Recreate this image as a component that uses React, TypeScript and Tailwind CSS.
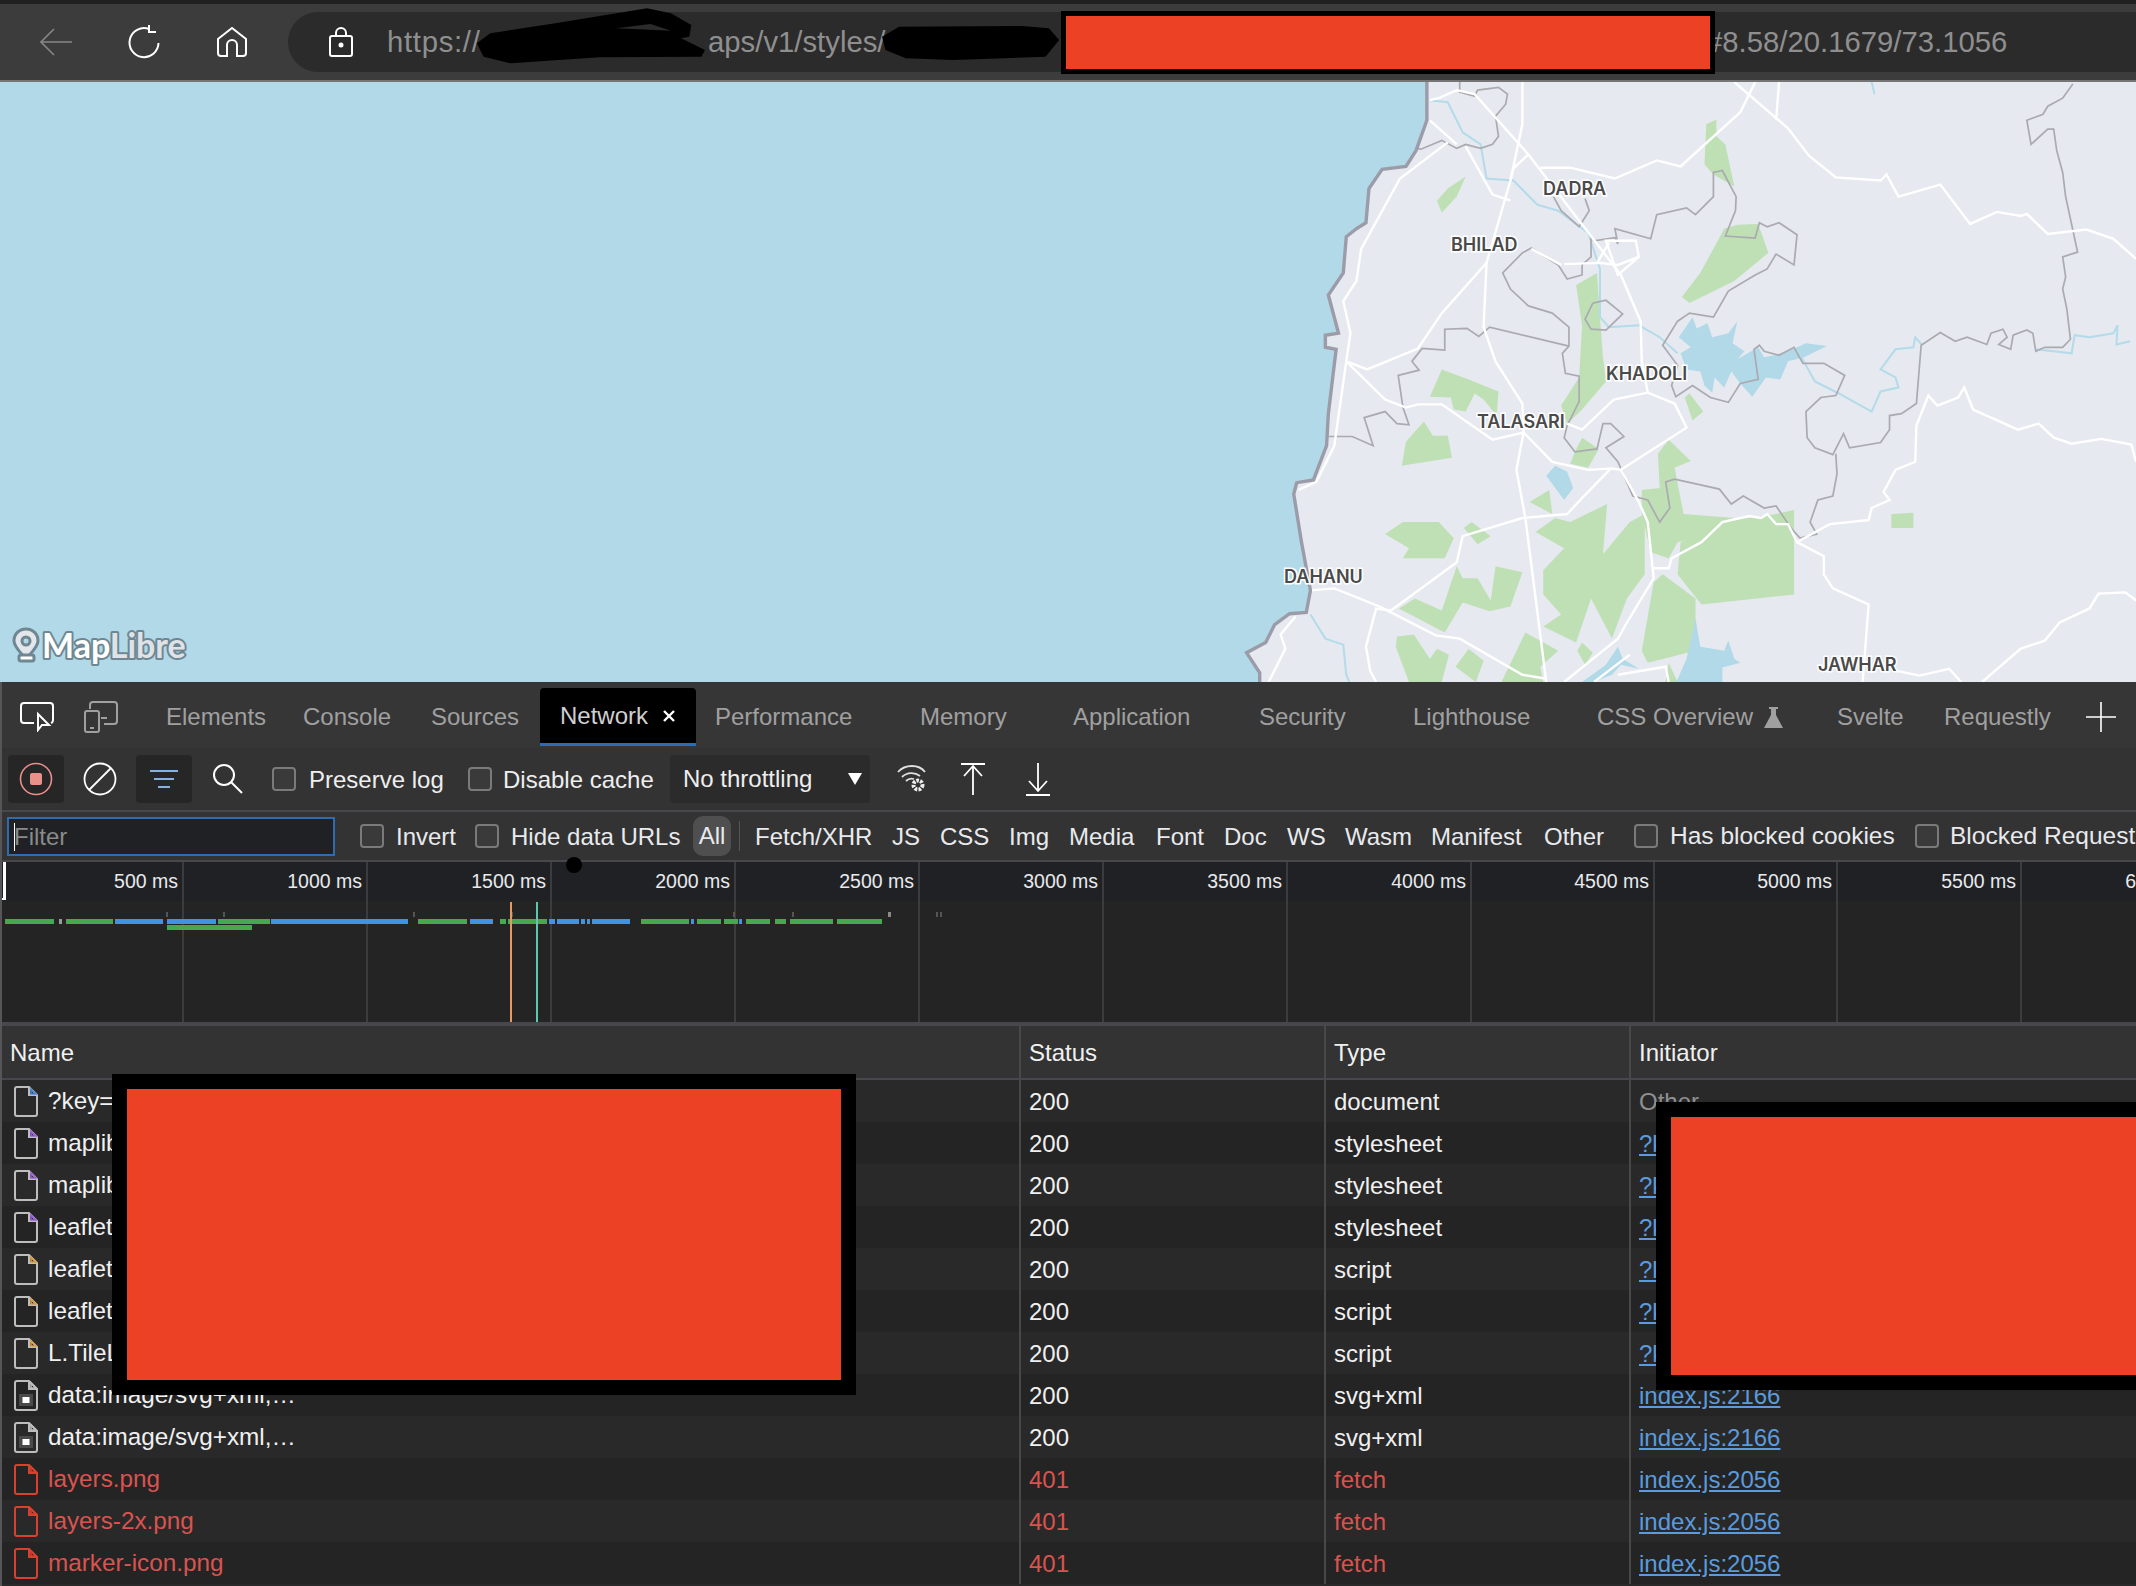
import React from "react";

const greens = [
  "848,160 865,148 865,190 880,210 895,315 860,285 845,260",
  "900,410 935,408 952,480 895,550 820,605 807,590 838,530 860,470 878,420",
  "445,290 430,340 405,380 397,350 415,320",
  "630,560 665,530 670,640 675,740 680,800 640,870 615,905 605,860 635,790 640,660",
  "405,770 450,795 500,825 497,885 475,845 460,830 445,875 425,870 420,840 385,838",
  "375,900 390,935 415,935 422,990 338,1010 345,950",
  "820,830 843,875 825,897 812,840",
  "640,940 668,968 650,1015 620,1005 628,975",
  "785,945 822,998 795,1015 810,1130 895,1140 850,1180 800,1200 785,1240 755,1225 740,1130 740,1070 770,1065 767,980",
  "995,1120 995,1330 840,1355 800,1280 805,1200 870,1150 965,1130",
  "682,1105 675,1230 720,1150 745,1130 745,1280 715,1340 690,1440 655,1340 630,1450 575,1410 605,1380 575,1330 575,1270 610,1215 562,1175 595,1140 620,1150",
  "585,1070 590,1130 552,1100",
  "340,1150 400,1150 425,1190 410,1240 340,1240 350,1215 310,1180",
  "455,1150 487,1185 465,1205 442,1165",
  "430,1260 440,1290 465,1290 487,1345 495,1260 540,1275 520,1360 485,1372 440,1350 410,1425 333,1365 360,1340 405,1370",
  "775,1280 830,1340 830,1470 750,1500 740,1470 760,1300",
  "545,1425 600,1470 570,1510 575,1548 505,1548",
  "330,1435 358,1430 385,1490 397,1465 417,1480 405,1548 350,1548 328,1460",
  "450,1465 475,1495 462,1548 428,1510",
  "640,1450 658,1475 645,1505 632,1470",
  "1158,1130 1195,1127 1195,1165 1158,1165",
  "785,1500 800,1548 780,1548",
];

const lakes = [
  "825,640 832,668 850,655 858,690 885,680 900,650 892,705 912,725 900,745 935,715 945,740 962,735 1000,715 1015,705 1050,712 1012,740 985,750 972,795 948,790 925,838 905,805 890,775 878,815 862,790 858,828 845,810 838,775 815,770 805,730 822,715 802,690",
  "595,1010 615,1025 625,1065 610,1095 600,1075 580,1035",
  "830,1390 838,1460 878,1470 885,1445 895,1490 905,1500 875,1512 875,1548 798,1548 815,1490",
  "700,1460 708,1490 735,1515 705,1505 690,1530 660,1548 640,1548 680,1505",
];

const rivers = [
  "385,100 415,105 440,180 470,210 480,295 525,300 565,360 600,375 650,430 670,520 670,640 685,665 735,660 770,690 800,730",
  "1125,55 1130,85",
  "1000,720 1030,800 1070,830 1125,875 1140,825 1170,815 1165,790 1140,770 1165,720 1195,715 1198,690 1210,710",
  "1400,720 1460,730 1465,685 1490,690 1530,680 1537,660 1535,708 1558,700",
  "185,1380 210,1440 240,1455 245,1530 250,1548",
];

const borders = [
  "435,55 435,80 460,90 465,75 500,68 515,85 512,110 495,140 500,190 490,210 470,220 445,210 430,220 405,200 370,222 360,220",
  "592,340 605,375 635,415 652,375 645,345",
  "655,440 660,450 695,442 700,458 695,420 755,445 765,385 815,368 830,385 860,340 860,280 875,275 898,340 897,375 880,438 930,443 937,405 950,415 970,405 1000,435 995,510 965,483 950,520 930,535 885,575 860,640 820,630 800,650 775,710 800,760 790,810 797,838 825,810 855,840 885,852 905,805 935,795 928,720 937,710 945,725 970,735 995,715 1010,755 1045,755 1080,785 1065,835 1040,840 1015,875 1017,940 1030,965 1060,982 1078,930 1088,965 1140,952 1155,920 1155,885 1175,880 1200,855 1208,710 1240,678 1265,700 1285,690 1318,708 1325,680 1345,670 1352,690 1338,708 1358,720 1362,685 1385,672 1395,680 1400,725 1415,715 1445,715 1458,695 1452,620 1445,570 1450,540 1445,490 1470,478 1450,340 1445,280 1435,225 1430,172 1420,172 1392,210 1385,150 1412,135 1420,115 1445,95 1462,60",
  "655,440 655,490 640,510 640,535 615,545 600,510 555,468 540,480 507,530 520,570 550,612 590,630 618,665 618,712 607,730 612,780 635,787 635,850 615,910 610,940 628,975 665,968 675,905 688,905 710,937 680,965 700,1000 725,1085 750,1095 770,1150 787,1115 780,1050 795,1043 870,1068 890,1105 910,1085 945,1115 965,1110 990,1165 1005,1190 1033,1180 1022,1150 1035,1095 1060,1085 1067,1030 1065,980",
  "618,712 485,665 467,688 447,668 410,670 410,722 372,718 355,750 367,772 332,785 340,865 350,908 330,905 310,875 275,890 290,960 255,937 215,937",
  "658,605 680,598 708,632 680,672 655,670 645,645 658,605",
];

const roads = [
  "415,205 335,295 270,470 262,550 240,600 252,680 245,750 225,960 195,1050 165,1070",
  "245,750 280,770 365,718 405,630 480,505 520,300 540,160 540,55",
  "245,750 310,845 345,865 365,857 405,857 490,945 542,927 590,1000 650,1020 688,1017 640,1090 615,1130 540,1140 440,1185 430,1250 320,1370",
  "480,505 475,665 495,750 540,855 542,927 530,1020 545,1140 580,1548",
  "385,100 400,95 430,75 460,85 550,235 525,270 520,300",
  "385,150 430,210",
  "445,215 490,335 520,350",
  "570,268 620,268 695,295 765,250 805,265 905,130 930,55",
  "895,55 985,170 1020,238 1065,292 1140,300 1150,285 1170,340 1240,310 1290,408 1335,378 1375,388 1385,383 1420,433 1485,422 1530,445 1568,495",
  "970,55 965,150",
  "550,235 705,535 738,650 740,750 750,828 795,855 815,915 705,1020 690,1017",
  "750,828 693,845 640,920 615,905",
  "705,1020 735,1100 750,1150 760,1290 715,1400 700,1440 610,1548",
  "610,508 670,505 700,510 735,490 730,450 680,450 700,535 735,490",
  "685,455 665,505",
  "555,470 605,510",
  "185,1320 225,1315 300,1360 395,1432 435,1440 540,1530 580,1540",
  "320,1370 295,1365 278,1460 285,1520 295,1548",
  "160,1385 135,1430 143,1465 115,1548",
  "760,1265 785,1265 790,1240 840,1200 875,1150 920,1135 940,1140 950,1130 965,1155 985,1155 1000,1200 1055,1155 1120,1145 1125,1115 1155,1095 1145,1075 1165,1020 1198,1000 1200,910 1220,835 1235,860 1270,840 1280,815 1295,870 1370,920 1405,905 1430,940 1460,955 1510,943 1560,957 1568,1000",
  "1000,1200 1045,1235 1045,1280 1060,1315 1120,1355 1110,1548",
  "1310,1548 1375,1465 1415,1445 1440,1400 1490,1365 1505,1328 1550,1325 1568,1345",
  "1160,1518 1205,1532 1255,1515 1275,1548",
  "720,1480 660,1548",
  "700,1530 780,1510 785,1548",
];

const coast =
  "380,55 380,150 362,225 345,265 305,272 283,320 278,405 262,420 245,440 240,530 215,585 232,680 210,685 210,715 228,720 215,880 212,960 190,1045 162,1052 157,1080 170,1200 185,1320 178,1375 150,1378 125,1405 110,1450 78,1475 100,1525 100,1548";

const placeLabels = [
  { name: "DADRA", x: 1543, y: 113 },
  { name: "BHILAD", x: 1451, y: 169 },
  { name: "KHADOLI", x: 1606, y: 298 },
  { name: "TALASARI", x: 1477, y: 346 },
  { name: "DAHANU", x: 1284, y: 501 },
  { name: "JAWHAR", x: 1818, y: 589 },
];

function MapArea() {
  return (
    <div className="h-[600px] shrink-0 bg-[#b1d9e8]">
      <svg className="block" width="2136" height="600" viewBox="0 0 2136 600">
        <g transform="translate(1200 -22) scale(0.597 0.4018)">
          <polygon points={`${coast} 1568,1548 1568,55`} fill="#e6e9ef" />
          {greens.map((p) => (
            <polygon key={p} points={p} fill="#bfe0b5" />
          ))}
          {lakes.map((p) => (
            <polygon key={p} points={p} fill="#b1d9e8" />
          ))}
          {rivers.map((p) => (
            <polyline key={p} points={p} fill="none" stroke="#b3dbea" strokeWidth="2" vectorEffect="non-scaling-stroke" />
          ))}
          {borders.map((p) => (
            <polyline key={p} points={p} fill="none" stroke="#aaaab0" strokeWidth="1.7" vectorEffect="non-scaling-stroke" />
          ))}
          {roads.map((p) => (
            <polyline key={p} points={p} fill="none" stroke="#ffffff" strokeWidth="2.4" vectorEffect="non-scaling-stroke" />
          ))}
          <polyline points={coast} fill="none" stroke="#9c9ca9" strokeWidth="3.4" vectorEffect="non-scaling-stroke" />
        </g>
        {placeLabels.map((l) => (
          <text
            key={l.name}
            x={l.x}
            y={l.y}
            fontFamily="Inter, sans-serif"
            fontWeight="600"
            fontSize="18"
            fill="#4a4a4a"
            stroke="#ffffff"
            strokeWidth="3"
            paintOrder="stroke"
          >
            {l.name}
          </text>
        ))}
        <g fill="#e3e6ea" stroke="#6e8792" strokeWidth="4" strokeLinejoin="round">
          <path
            fillRule="evenodd"
            strokeWidth="3"
            d="M26 547c7 0 12 5 12 12 0 6-7 12-12 18-5-6-12-12-12-18 0-7 5-12 12-12zm0 8a4 4 0 1 0 0 8 4 4 0 0 0 0-8z"
          />
          <rect x="19" y="573" width="15" height="6" rx="2" fill="#ffffff" strokeWidth="3" />
          <text x="42" y="576" fontFamily="Lato, sans-serif" fontWeight="700" fontSize="34" paintOrder="stroke">
            <tspan fill="#ffffff">Map</tspan>
            <tspan fill="#dfe3e8">Libre</tspan>
          </text>
        </g>
      </svg>
    </div>
  );
}

function AddressBar() {
  return (
    <div className="h-[78px] shrink-0 flex items-center bg-[#3c3c3c] border-b-2 border-[#757575]">
      <svg className="ml-[40px] shrink-0" width="32" height="28" viewBox="0 0 32 28" fill="none" stroke="#858585" strokeWidth="1.6">
        <path d="M32 14H1M14 1 1 14l13 13" />
      </svg>
      <svg className="ml-[55px] shrink-0" width="34" height="34" viewBox="0 0 34 34" fill="none" stroke="#ffffff" strokeWidth="2">
        <path d="M22 4A14.5 14.5 0 1 0 31.5 18" />
        <path d="M22 0v7h7" />
      </svg>
      <svg className="ml-[56px] shrink-0" width="30" height="30" viewBox="0 0 30 30" fill="none" stroke="#ffffff" strokeWidth="2">
        <path d="M1 12 15 1l14 11v14a3 3 0 0 1-3 3h-6V18a5 5 0 0 0-10 0v11H4a3 3 0 0 1-3-3z" />
      </svg>
      <div className="ml-[41px] flex-1 h-[60px] rounded-l-[30px] bg-[#2b2b2b] flex items-center text-[29.3px] text-[#8f8f8f] whitespace-nowrap overflow-hidden">
        <svg className="ml-[41px] shrink-0" width="24" height="30" viewBox="0 0 24 30" fill="none" stroke="#ffffff" strokeWidth="2">
          <rect x="1" y="9" width="22" height="20" rx="2" />
          <path d="M7 9V6a5 5 0 0 1 10 0v3" />
          <circle cx="12" cy="18" r="1.5" fill="#ffffff" />
        </svg>
        <span className="ml-[34px] w-[321px] shrink-0 tracking-[0.7px]">https://</span>
        <span className="w-[998px] shrink-0">aps/v1/styles/</span>
        <span>#8.58/20.1679/73.1056</span>
      </div>
    </div>
  );
}

const tabs = [
  { label: "Elements", cls: "w-[137px]" },
  { label: "Console", cls: "w-[128px]" },
  { label: "Sources", cls: "w-[109px]" },
  { label: "Network", cls: "" },
  { label: "Performance", cls: "w-[205px] ml-[19px]" },
  { label: "Memory", cls: "w-[153px]" },
  { label: "Application", cls: "w-[186px]" },
  { label: "Security", cls: "w-[154px]" },
  { label: "Lighthouse", cls: "w-[184px]" },
  { label: "CSS Overview", cls: "w-[240px]" },
  { label: "Svelte", cls: "w-[107px]" },
  { label: "Requestly", cls: "w-[142px]" },
];

function TabBar() {
  return (
    <div className="h-[66px] shrink-0 flex items-center pt-[4px] bg-[#363636] text-[#a0a0a0]">
      <svg className="ml-[18px] shrink-0" width="34" height="30" viewBox="0 0 34 30" fill="none" stroke="#ffffff" strokeWidth="2">
        <path d="M14 21H4a3 3 0 0 1-3-3V4a3 3 0 0 1 3-3h26a3 3 0 0 1 3 3v14a3 3 0 0 1-2 3" />
        <path d="M18 12v16l4-5h7z" />
      </svg>
      <svg className="ml-[30px] shrink-0" width="34" height="32" viewBox="0 0 34 32" fill="none" stroke="#a0a0a0" strokeWidth="2">
        <path d="M6 8V4a3 3 0 0 1 3-3h21a3 3 0 0 1 3 3v16a3 3 0 0 1-3 3H20M17 17h6" />
        <rect x="1" y="10" width="14" height="21" rx="2" />
        <path d="M6 27h4" />
      </svg>
      <div className="ml-[48px] flex items-center whitespace-nowrap">
        {tabs.map((t) =>
          t.label === "Network" ? (
            <div
              key={t.label}
              className="w-[156px] h-[58px] rounded-t-[4px] pl-[20px] flex items-center bg-black text-[#d0d0d0] border-b-[3px] border-[#2a6cb8]"
            >
              {t.label}
              <svg className="ml-[15px]" width="12" height="12" viewBox="0 0 12 12" stroke="#ffffff" strokeWidth="2.4">
                <path d="M1 1l10 10M11 1 1 11" />
              </svg>
            </div>
          ) : (
            <div key={t.label} className={`flex items-center ${t.cls}`}>
              {t.label}
              {t.label === "CSS Overview" && (
                <svg className="ml-[11px]" width="19" height="21" viewBox="0 0 19 21" fill="#a0a0a0">
                  <path d="M5 0h9v2h-2v6l7 13H0L7 8V2H5z" />
                </svg>
              )}
            </div>
          ),
        )}
        <svg width="30" height="30" viewBox="0 0 30 30" stroke="#ffffff" strokeWidth="1.6">
          <path d="M0 15h30M15 0v30" />
        </svg>
      </div>
    </div>
  );
}

function CheckBox({ cls = "" }: { cls?: string }) {
  return <span className={`w-[24px] h-[24px] shrink-0 rounded-[4px] border-2 border-[#7a7a7a] bg-[#3a3a3a] ${cls}`} />;
}

function Toolbar() {
  return (
    <div className="h-[64px] shrink-0 flex items-center bg-[#333333] border-b-2 border-[#48484c] text-[#eeeeee] whitespace-nowrap">
      <div className="ml-[6px] w-[56px] h-[48px] rounded-[4px] bg-[#262626] flex items-center justify-center">
        <svg width="34" height="34" viewBox="0 0 34 34">
          <circle cx="17" cy="17" r="15.5" fill="none" stroke="#e8908a" strokeWidth="1.6" />
          <rect x="11" y="11" width="12" height="12" rx="2" fill="#e8908a" />
        </svg>
      </div>
      <div className="w-[72px] flex justify-center">
        <svg width="34" height="34" viewBox="0 0 34 34" fill="none" stroke="#ffffff" strokeWidth="1.8">
          <circle cx="17" cy="17" r="15.5" />
          <path d="M6 28 28 6" />
        </svg>
      </div>
      <div className="w-[56px] h-[48px] rounded-[4px] bg-[#262626] flex items-center justify-center">
        <svg width="28" height="20" viewBox="0 0 28 20" stroke="#84b4e4" strokeWidth="2">
          <path d="M0 2h28M4 10h20M8 18h12" />
        </svg>
      </div>
      <div className="w-[72px] flex justify-center">
        <svg width="30" height="30" viewBox="0 0 30 30" fill="none" stroke="#ffffff" strokeWidth="2">
          <circle cx="11" cy="11" r="10" />
          <path d="M18 18l11 11" />
        </svg>
      </div>
      <CheckBox cls="ml-[8px]" />
      <span className="ml-[13px] w-[159px] shrink-0 pt-[1px]">Preserve log</span>
      <CheckBox />
      <span className="ml-[11px] w-[167px] shrink-0 pt-[1px]">Disable cache</span>
      <div className="w-[200px] h-[48px] shrink-0 rounded-[4px] bg-[#2b2b2b] pl-[13px] pr-[8px] flex items-center justify-between">
        No throttling
        <svg width="14" height="12" viewBox="0 0 14 12" fill="#ffffff">
          <path d="M0 0h14L7 12z" />
        </svg>
      </div>
      <svg className="ml-[27px] shrink-0" width="30" height="30" viewBox="0 0 30 30" fill="none" stroke="#e0e0e0" strokeWidth="1.8">
        <path d="M1 8c7-8 21-8 27 0M5 13c5-5 13-5 18-1M9 17c2-2 5-3 8-2" />
        <circle cx="21" cy="21" r="4.5" fill="#333333" stroke="#eeeeee" strokeWidth="4" strokeDasharray="2.6 1.2" />
      </svg>
      <svg className="ml-[34px] shrink-0" width="24" height="32" viewBox="0 0 24 32" fill="none" stroke="#ffffff" strokeWidth="1.8">
        <path d="M0 1h24M12 32V3M3 13l9-10 9 10" />
      </svg>
      <svg className="ml-[41px] shrink-0" width="24" height="33" viewBox="0 0 24 33" fill="none" stroke="#ffffff" strokeWidth="1.8">
        <path d="M0 32h24M12 0v28M3 18l9 10 9-10" />
      </svg>
    </div>
  );
}

const typeFilters = [
  { label: "Fetch/XHR", cls: "w-[137px]" },
  { label: "JS", cls: "w-[48px]" },
  { label: "CSS", cls: "w-[69px]" },
  { label: "Img", cls: "w-[60px]" },
  { label: "Media", cls: "w-[87px]" },
  { label: "Font", cls: "w-[68px]" },
  { label: "Doc", cls: "w-[63px]" },
  { label: "WS", cls: "w-[58px]" },
  { label: "Wasm", cls: "w-[86px]" },
  { label: "Manifest", cls: "w-[113px]" },
  { label: "Other", cls: "w-[90px]" },
];

function FilterRow() {
  return (
    <div className="h-[50px] shrink-0 flex items-center bg-[#333333] border-b-2 border-[#48484c] text-[#e8eaed] whitespace-nowrap overflow-hidden">
      <div className="ml-[5px] w-[328px] h-[39px] shrink-0 bg-[#202124] border-2 border-[#2f6bb0] flex items-center pl-[5px] pt-[2px] text-[#8a8a8a]">
        <span className="w-[1px] h-[28px] bg-white mr-[-1px]" />
        Filter
      </div>
      <CheckBox cls="ml-[25px]" />
      <span className="ml-[12px] w-[79px] shrink-0 pt-[1px]">Invert</span>
      <CheckBox />
      <span className="ml-[12px] w-[182px] shrink-0 pt-[1px]">Hide data URLs</span>
      <span className="w-[38px] h-[40px] shrink-0 rounded-[10px] bg-[#4f4f4f] flex items-center justify-center">All</span>
      <span className="ml-[8px] w-[1px] h-[30px] shrink-0 bg-[#55555a]" />
      <div className="ml-[15px] flex items-center pt-[1px]">
        {typeFilters.map((f) => (
          <span key={f.label} className={`shrink-0 ${f.cls}`}>
            {f.label}
          </span>
        ))}
      </div>
      <CheckBox />
      <span className="ml-[12px] w-[245px] shrink-0 pt-[1px] text-[24.5px]">Has blocked cookies</span>
      <CheckBox />
      <span className="ml-[11px] shrink-0 pt-[1px] text-[24.5px]">Blocked Requests</span>
    </div>
  );
}

const ticks = [
  { label: "500 ms", cls: "w-[182px]" },
  { label: "1000 ms", cls: "w-[184px]" },
  { label: "1500 ms", cls: "w-[184px]" },
  { label: "2000 ms", cls: "w-[184px]" },
  { label: "2500 ms", cls: "w-[184px]" },
  { label: "3000 ms", cls: "w-[184px]" },
  { label: "3500 ms", cls: "w-[184px]" },
  { label: "4000 ms", cls: "w-[184px]" },
  { label: "4500 ms", cls: "w-[183px]" },
  { label: "5000 ms", cls: "w-[183px]" },
  { label: "5500 ms", cls: "w-[184px]" },
  { label: "6000 ms", cls: "w-[184px]" },
];

const G = "#46a850";
const B = "#3f93e0";
// segments in page x, [from, to, colour]
const bars: [number, number, string][] = [
  [5, 54, G], [59, 62, "#9a9a9a"], [66, 113, G], [115, 163, B], [167, 216, B], [218, 270, G], [271, 408, B],
  [418, 467, G], [470, 493, B], [500, 506, G], [508, 547, G], [549, 555, B], [557, 579, B], [581, 585, B],
  [587, 590, B], [592, 630, B], [641, 689, G], [691, 694, B], [697, 721, G], [724, 738, G], [739, 742, B],
  [746, 770, G], [775, 786, G], [790, 833, G], [837, 882, G],
];
const marks = [166, 223, 413, 511, 733, 792, 936, 940];

function Timeline() {
  return (
    <div className="relative h-[164px] shrink-0 flex overflow-hidden border-b-4 border-[#48484c] text-[19.5px] text-[#e8eaed] whitespace-nowrap">
      {ticks.map((t) => (
        <div key={t.label} className={`${t.cls} shrink-0 flex flex-col border-r-2 border-[#3c3c3f]`}>
          <div className="h-[39px] bg-[#202124] pr-[4px] flex items-center justify-end">{t.label}</div>
          <div className="flex-1 bg-[#242424]" />
        </div>
      ))}
      <span className="absolute left-[-2px] top-0 w-[6px] h-[38px] border-r-[3px] border-b-[2px] border-white" />
      <svg className="absolute left-[-2px] top-0" width="1000" height="160" viewBox="0 0 1000 160">
        {bars.map(([a, b, c]) => (
          <rect key={a} x={a} y="57" width={b - a} height="5" fill={c} />
        ))}
        <rect x="167" y="63" width="85" height="5" fill={G} />
        {marks.map((x) => (
          <rect key={x} x={x} y="50" width="2" height="5" fill="#555555" />
        ))}
        <rect x="888" y="50" width="3" height="5" fill="#8a8a8a" />
        <rect x="510" y="40" width="2" height="120" fill="#e69a62" />
        <rect x="536" y="40" width="2" height="120" fill="#5cc8b4" />
      </svg>
    </div>
  );
}

function FileIcon({ kind }: { kind: string }) {
  const red = kind === "red";
  const stroke = red ? "#d8412f" : "#bdbdbd";
  const fold = kind === "doc" ? "#4a86d8" : kind === "css" ? "#9a5fd8" : kind === "js" ? "#d8a040" : stroke;
  return (
    <svg className="ml-[12px] shrink-0" width="24" height="31" viewBox="0 0 24 31" fill="none" strokeWidth="2">
      <path d="M15 1H3a2 2 0 0 0-2 2v25a2 2 0 0 0 2 2h18a2 2 0 0 0 2-2V9" stroke={stroke} />
      <path d="M15 1l8 8h-8z" stroke={stroke} />
      <path d="M17 8h5l-5-5z" stroke={fold} strokeWidth="1.6" />
      {kind === "svg" && (
        <g>
          <rect x="5" y="14" width="14" height="12" fill="#4a4a4a" />
          <rect x="8.5" y="17" width="7" height="6" fill="#ffffff" />
        </g>
      )}
    </svg>
  );
}

const rows = [
  { name: "?key=", kind: "doc", status: "200", type: "document", init: "Other" },
  { name: "maplib", kind: "css", status: "200", type: "stylesheet", init: "?key=" },
  { name: "maplib", kind: "css", status: "200", type: "stylesheet", init: "?key=" },
  { name: "leaflet", kind: "css", status: "200", type: "stylesheet", init: "?key=" },
  { name: "leaflet", kind: "js", status: "200", type: "script", init: "?key=" },
  { name: "leaflet", kind: "js", status: "200", type: "script", init: "?key=" },
  { name: "L.TileL", kind: "js", status: "200", type: "script", init: "?key=" },
  { name: "data:image/svg+xml,…", kind: "svg", status: "200", type: "svg+xml", init: "index.js:2166" },
  { name: "data:image/svg+xml,…", kind: "svg", status: "200", type: "svg+xml", init: "index.js:2166" },
  { name: "layers.png", kind: "red", status: "401", type: "fetch", init: "index.js:2056" },
  { name: "layers-2x.png", kind: "red", status: "401", type: "fetch", init: "index.js:2056" },
  { name: "marker-icon.png", kind: "red", status: "401", type: "fetch", init: "index.js:2056" },
];

function NetworkTable() {
  return (
    <div className="flex-1 min-h-0 text-[#f0f0f0] whitespace-nowrap bg-[#292929]">
      <div className="h-[54px] grid grid-cols-[1019px_305px_305px_1fr] items-stretch bg-[#333333] border-b-2 border-[#48484c]">
        <div className="pl-[8px] pt-[1px] flex items-center border-r-2 border-[#48484c]">Name</div>
        <div className="pl-[8px] pt-[1px] flex items-center border-r-2 border-[#48484c]">Status</div>
        <div className="pl-[8px] pt-[1px] flex items-center border-r-2 border-[#48484c]">Type</div>
        <div className="pl-[8px] pt-[1px] flex items-center">Initiator</div>
      </div>
      {rows.map((r, i) => {
        const failed = r.status === "401";
        return (
          <div
            key={i}
            className={`h-[42px] grid grid-cols-[1019px_305px_305px_1fr] items-stretch ${i % 2 === 0 ? "bg-[#292929]" : "bg-[#242424]"} ${failed ? "text-[#d9534f]" : ""}`}
          >
            <div className="flex items-center border-r-2 border-[#48484c]">
              <FileIcon kind={r.kind} />
              <span className="ml-[10px] pt-[1px] text-[24.3px]">{r.name}</span>
            </div>
            <div className="pl-[8px] pt-[1px] flex items-center border-r-2 border-[#48484c]">{r.status}</div>
            <div className="pl-[8px] pt-[1px] flex items-center border-r-2 border-[#48484c]">{r.type}</div>
            <div className="pl-[8px] pt-[1px] flex items-center">
              {r.init === "Other" ? (
                <span className="text-[#909090]">Other</span>
              ) : (
                <a className="text-[#5b9bdd] underline">{r.init}</a>
              )}
            </div>
          </div>
        );
      })}
    </div>
  );
}

export default function App() {
  return (
    <div className="relative w-[2136px] h-[1586px] overflow-hidden flex flex-col bg-[#202020] font-['Liberation_Sans',sans-serif] text-[24px] leading-none">
      <div className="h-[4px] shrink-0 bg-[#202020]" />
      <AddressBar />
      <MapArea />
      <div className="flex-1 min-h-0 flex flex-col border-l-2 border-[#55555a]">
        <TabBar />
        <Toolbar />
        <FilterRow />
        <Timeline />
        <NetworkTable />
      </div>

      {/* redactions that sit on top of the screenshot */}
      <svg className="absolute left-0 top-0" width="1100" height="80" viewBox="0 0 1615 240" preserveAspectRatio="none">
        <path
          fillRule="evenodd"
          fill="#000000"
          d="M700 130 720 100 820 68 950 25 985 40 1015 75 1012 110 1000 115 1035 150 1030 170 880 172 750 190 710 170ZM905 85 955 72 985 92Z"
        />
        <path fill="#000000" d="M1295 110 1320 80 1500 78 1540 85 1555 120 1535 170 1400 180 1330 175 1300 150Z" />
      </svg>
      <div className="absolute left-[1061px] top-[11px] w-[654px] h-[63px] bg-[#ec4125] border-[5px] border-black" />
      <div className="absolute left-[112px] top-[1074px] w-[744px] h-[321px] bg-[#ec4125] border-[15px] border-black" />
      <div className="absolute left-[1656px] top-[1102px] w-[480px] h-[288px] bg-[#ec4125] border-y-[15px] border-l-[15px] border-black" />
      <span className="absolute left-[566px] top-[857px] w-[16px] h-[16px] rounded-full bg-black" />
    </div>
  );
}
